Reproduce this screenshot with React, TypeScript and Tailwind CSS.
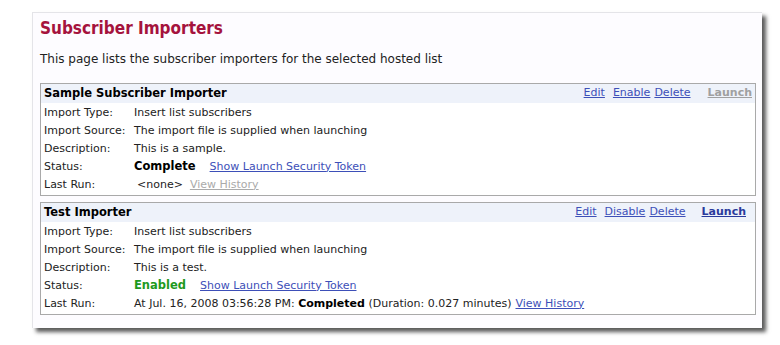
import React from "react";

const font = { fontFamily: '"DejaVu Sans", Verdana, sans-serif' };
const condensed = { fontFamily: '"DejaVu Sans Condensed", "DejaVu Sans", Verdana, sans-serif' };

function Row({ label, children }: { label: string; children: React.ReactNode }) {
  return (
    <div className="flex h-[18px] items-center">
      <div className="w-[90px] shrink-0">{label}</div>
      <div className="flex items-center">{children}</div>
    </div>
  );
}

function Box({
  title,
  toggle,
  launchEnabled,
  description,
  status,
  lastRun,
}: {
  title: string;
  toggle: string;
  launchEnabled: boolean;
  description: string;
  status: React.ReactNode;
  lastRun: React.ReactNode;
}) {
  return (
    <div className="border border-[#a9a9a9] bg-white">
      <div
        className={
          launchEnabled
            ? "flex h-[19px] items-center justify-between bg-[#eef2fa] pl-[3px] pr-[9px]"
            : "flex h-[19px] items-center justify-between bg-[#eef2fa] pl-[3px] pr-[3px]"
        }
      >
        <div className="font-bold text-[11.5px] text-black">{title}</div>
        <div className="flex items-center text-[11px]">
          <a className="text-[#3d4fb8] underline">Edit</a>
          <a className="ml-[8px] text-[#3d4fb8] underline">{toggle}</a>
          <a className="ml-[4px] text-[#3d4fb8] underline">Delete</a>
          {launchEnabled ? (
            <a className="ml-[16px] font-bold text-[#2a3a9c] underline">Launch</a>
          ) : (
            <a className="ml-[17px] font-bold text-[#a0a0a0] underline">Launch</a>
          )}
        </div>
      </div>
      <div className="px-[3px] pt-[1px] pb-[1px] text-[11px] text-[#222]">
        <Row label="Import Type:">Insert list subscribers</Row>
        <Row label="Import Source:">The import file is supplied when launching</Row>
        <Row label="Description:">{description}</Row>
        <Row label="Status:">{status}</Row>
        <Row label="Last Run:">{lastRun}</Row>
      </div>
    </div>
  );
}

export default function App() {
  return (
    <div className="w-[780px] h-[345px] bg-white" style={font}>
      <div className="pl-[32px] pt-[12px]">
        <div className="w-[730px] h-[316px] border-t border-l border-[#e4e4e8] bg-[#fdfcff] shadow-[4px_4px_4px_rgba(0,0,0,0.65)] px-[7px]">
          <h1 className="mt-[5px] text-[17px] leading-[20px] font-bold text-[#a5133d]" style={condensed}>
            Subscriber Importers
          </h1>
          <p className="mt-[13px] text-[12px] leading-[16px] text-[#222]">
            This page lists the subscriber importers for the selected hosted list
          </p>
          <div className="mt-[16px] w-[716px]">
            <Box
              title="Sample Subscriber Importer"
              toggle="Enable"
              launchEnabled={false}
              description="This is a sample."
              status={
                <>
                  <span className="font-bold text-[11.5px] text-black">Complete</span>
                  <a className="ml-[14px] text-[#3d4fb8] underline">Show Launch Security Token</a>
                </>
              }
              lastRun={
                <>
                  <span className="ml-[3px]">&lt;none&gt;</span>
                  <a className="ml-[7px] text-[#aaaaaa] underline">View History</a>
                </>
              }
            />
            <div className="mt-[6px]">
              <Box
                title="Test Importer"
                toggle="Disable"
                launchEnabled={true}
                description="This is a test."
                status={
                  <>
                    <span className="font-bold text-[11.5px] text-[#1e9a1e]">Enabled</span>
                    <a className="ml-[14px] text-[#3d4fb8] underline">Show Launch Security Token</a>
                  </>
                }
                lastRun={
                  <>
                    <span>
                      At Jul. 16, 2008 03:56:28 PM: <b className="text-black">Completed</b> (Duration: 0.027 minutes)
                    </span>
                    <a className="ml-[4px] text-[#3d4fb8] underline">View History</a>
                  </>
                }
              />
            </div>
          </div>
        </div>
      </div>
    </div>
  );
}
